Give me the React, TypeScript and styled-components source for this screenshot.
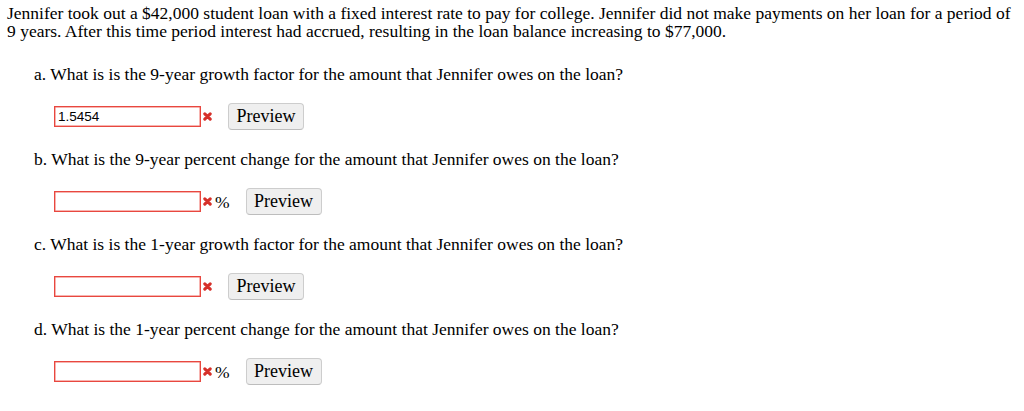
import React from "react";
import styled, { createGlobalStyle } from "styled-components";

const Global = createGlobalStyle`
  html, body { margin: 0; padding: 0; background: #fff; }
  body { font-family: "Liberation Serif", "Times New Roman", serif; color: #000; }
`;

const Page = styled.div`
  padding: 4px 8px 0 7px;
  font-size: 17.5px;
  line-height: 18px;
`;

const Intro = styled.p`
  margin: 0;
`;

const Question = styled.div<{ $top: number }>`
  margin: ${(p) => p.$top}px 0 0 27px;
`;

const QText = styled.div`
  line-height: 18px;
`;

const AnswerRow = styled.div`
  display: flex;
  align-items: center;
  height: 27px;
  margin: 20px 0 0 20px;
`;

const Input = styled.input`
  box-sizing: border-box;
  width: 147px;
  height: 21px;
  margin: 0;
  padding: 0 3px;
  border: 1px solid #e8473f;
  box-shadow: inset 0 0 0 0.5px #ef6b62;
  border-radius: 0;
  outline: none;
  background: #fff;
  font-family: "Liberation Sans", Arial, sans-serif;
  font-size: 13.5px;
  color: #000;
`;

const Mark = styled.svg`
  width: 9px;
  height: 9px;
  margin-left: 2px;
  flex: none;
`;

const Unit = styled.span`
  margin-left: 3px;
  font-size: 17.5px;
`;

const Button = styled.button`
  box-sizing: border-box;
  margin-left: 16px;
  height: 27px;
  width: 76px;
  padding: 0;
  border: 1px solid #cdcdcd;
  border-bottom-color: #bdbdbd;
  border-radius: 4px;
  background: #efefef;
  font-family: "Liberation Serif", "Times New Roman", serif;
  font-size: 18px;
  color: #000;
`;

const XMark = () => (
  <Mark viewBox="0 0 10 10">
    <path d="M2 2 L8 8 M8 2 L2 8" stroke="#d6302a" strokeWidth="3.4" strokeLinecap="round" />
  </Mark>
);

const items = [
  { q: "a. What is is the 9-year growth factor for the amount that Jennifer owes on the loan?", val: "1.5454", pct: false },
  { q: "b. What is the 9-year percent change for the amount that Jennifer owes on the loan?", val: "", pct: true },
  { q: "c. What is is the 1-year growth factor for the amount that Jennifer owes on the loan?", val: "", pct: false },
  { q: "d. What is the 1-year percent change for the amount that Jennifer owes on the loan?", val: "", pct: true },
];

export default function App() {
  return (
    <>
      <Global />
      <Page>
        <Intro>
          Jennifer took out a $42,000 student loan with a fixed interest rate to pay for college. Jennifer did not make payments on her loan for a period of 9 years. After this time period interest had accrued, resulting in the loan balance increasing to $77,000.
        </Intro>
        {items.map((it, i) => (
          <Question key={i} $top={i === 0 ? 25 : 20}>
            <QText>{it.q}</QText>
            <AnswerRow>
              <Input defaultValue={it.val} />
              <XMark />
              {it.pct && <Unit>%</Unit>}
              <Button>Preview</Button>
            </AnswerRow>
          </Question>
        ))}
      </Page>
    </>
  );
}
